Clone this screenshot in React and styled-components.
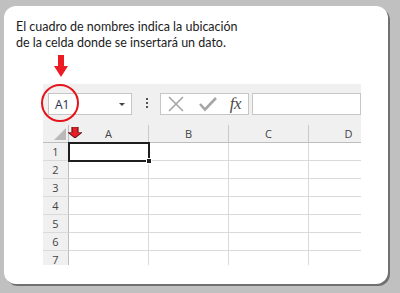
import React from "react";
import styled, { createGlobalStyle } from "styled-components";

const Global = createGlobalStyle`
  html, body { margin: 0; padding: 0; background: #c0c0c0; }
  #root { width: 400px; height: 293px; }
`;

const Page = styled.div`
  width: 400px;
  height: 293px;
  padding: 6px 0 0 4px;
  box-sizing: border-box;
  background: #c0c0c0;
`;

const Card = styled.div`
  width: 384px;
  height: 278px;
  background: #fff;
  border-radius: 12px;
  box-shadow: 2px 2px 0 #707070;
  padding: 13px 0 0 12px;
  box-sizing: border-box;
  display: flex;
  flex-direction: column;
`;

const Caption = styled.p`
  margin: 0;
  font-family: Lato, "Open Sans", sans-serif;
  font-size: 12.5px;
  line-height: 16px;
  color: #1c1c24;
`;

const ArrowRow = styled.div`
  height: 33px;
  padding: 4px 0 0 38px;
  box-sizing: border-box;
`;

const ExcelWrap = styled.div`
  position: relative;
  margin-left: 27px;
  width: 318px;
`;

const Frame = styled.div`
  width: 318px;
  height: 181px;
  overflow: hidden;
  font-family: "Open Sans", "Liberation Sans", sans-serif;
`;

const Toolbar = styled.div`
  height: 41px;
  background: #f0f0f0;
  display: flex;
  align-items: flex-start;
  padding: 9px 0 0 5px;
  box-sizing: border-box;
`;

const NameBox = styled.div`
  width: 91px;
  height: 22px;
  box-sizing: border-box;
  background: #fff;
  border: 1px solid #c6c6c6;
  display: flex;
  align-items: center;
  justify-content: space-between;
  padding: 0 6px 0 6px;
  font-size: 12px;
  color: #22304f;
`;

const Caret = styled.span`
  width: 0;
  height: 0;
  border-left: 3px solid transparent;
  border-right: 3px solid transparent;
  border-top: 3px solid #444;
`;

const Dots = styled.div`
  margin: 5px 0 0 14px;
  display: flex;
  flex-direction: column;
  gap: 2px;
  & > i { width: 2px; height: 2px; background: #555; display: block; }
`;

const FxBox = styled.div`
  margin-left: 12px;
  width: 98px;
  height: 22px;
  box-sizing: border-box;
  background: #fff;
  border: 1px solid #c6c6c6;
  display: flex;
  align-items: center;
  padding-left: 6px;
`;

const Fx = styled.span`
  margin-left: 13px;
  font-family: "Liberation Serif", serif;
  font-style: italic;
  font-size: 17px;
  color: #4a4a4a;
  letter-spacing: -0.5px;
`;

const InputBox = styled.div`
  margin-left: 3px;
  width: 120px;
  height: 22px;
  box-sizing: border-box;
  background: #fff;
  border: 1px solid #c6c6c6;
`;

const Grid = styled.div`
  position: relative;
  display: grid;
  grid-template-columns: 26px repeat(4, 80px);
  grid-auto-rows: 18px;
`;

const Cell = styled.div`
  box-sizing: border-box;
  border-right: 1px solid ${(p) => (p.$head ? "#c9c9c9" : "#dadada")};
  border-bottom: 1px solid ${(p) => (p.$head ? "#bdbdbd" : "#dadada")};
  background: ${(p) => (p.$head ? "#f0f0f0" : "#fff")};
  display: flex;
  align-items: center;
  justify-content: center;
  font-size: 11px;
  color: #444;
  position: relative;
`;

const RowHead = styled(Cell)`
  background: #f0f0f0;
  border-right: 1px solid #bdbdbd;
  border-bottom: 1px solid #dadada;
`;

const Corner = styled(Cell)`
  background: #f0f0f0;
  border-right: 1px solid #bdbdbd;
  border-bottom: 1px solid #bdbdbd;
  justify-content: flex-end;
  align-items: flex-end;
  padding: 0 2px 2px 0;
`;

const Selection = styled.div`
  position: absolute;
  left: 25px;
  top: 17px;
  width: 82px;
  height: 20px;
  box-sizing: border-box;
  border: 2px solid #1e1e1e;
  pointer-events: none;
  &::after {
    content: "";
    position: absolute;
    right: -4px;
    bottom: -4px;
    width: 4px;
    height: 4px;
    background: #1e1e1e;
    border: 1px solid #fff;
  }
`;

const SmallArrow = styled.div`
  position: absolute;
  left: 25px;
  top: 2px;
  line-height: 0;
`;

const Circle = styled.div`
  position: absolute;
  left: -2px;
  top: 0;
  width: 38px;
  height: 38px;
  box-sizing: border-box;
  border: 2px solid #e5141b;
  border-radius: 50%;
  pointer-events: none;
`;

const RedArrow = ({ w = 14, h = 22, outline }) => (
  <svg width={w} height={h} viewBox="0 0 14 22" preserveAspectRatio="none">
    <path
      d="M4 0 H10 V11 H14 L7 22 L0 11 H4 Z"
      fill="#ec1c24"
      stroke={outline ? "#5a1a1a" : "none"}
      strokeWidth={outline ? 1.2 : 0}
    />
  </svg>
);

const cols = ["A", "B", "C", "D"];
const rows = [1, 2, 3, 4, 5, 6, 7];

export default function App() {
  return (
    <>
      <Global />
      <Page>
        <Card>
          <Caption>
            El cuadro de nombres indica la ubicación
            <br />
            de la celda donde se insertará un dato.
          </Caption>
          <ArrowRow>
            <RedArrow />
          </ArrowRow>
          <ExcelWrap>
            <Frame>
              <Toolbar>
                <NameBox>
                  <span>A1</span>
                  <Caret />
                </NameBox>
                <Dots>
                  <i />
                  <i />
                  <i />
                </Dots>
                <FxBox>
                  <svg width="18" height="16" viewBox="0 0 18 16">
                    <path d="M2 1 L16 15 M16 1 L2 15" stroke="#a6a6a6" strokeWidth="1.6" fill="none" />
                  </svg>
                  <svg width="18" height="16" viewBox="0 0 18 16" style={{ marginLeft: 14 }}>
                    <path d="M1 8 L6 13.5 L17 2" stroke="#a6a6a6" strokeWidth="2.6" fill="none" />
                  </svg>
                  <Fx>fx</Fx>
                </FxBox>
                <InputBox />
              </Toolbar>
              <Grid>
                <Corner>
                  <svg width="12" height="12" viewBox="0 0 12 12">
                    <path d="M12 0 V12 H0 Z" fill="#b9b9b9" />
                  </svg>
                </Corner>
                {cols.map((c) => (
                  <Cell key={c} $head>
                    {c}
                  </Cell>
                ))}
                {rows.map((r) => (
                  <React.Fragment key={r}>
                    <RowHead>{r}</RowHead>
                    {cols.map((c) => (
                      <Cell key={c} />
                    ))}
                  </React.Fragment>
                ))}
                <Selection />
                <SmallArrow>
                  <RedArrow w={14} h={11} outline />
                </SmallArrow>
              </Grid>
            </Frame>
            <Circle />
          </ExcelWrap>
        </Card>
      </Page>
    </>
  );
}
